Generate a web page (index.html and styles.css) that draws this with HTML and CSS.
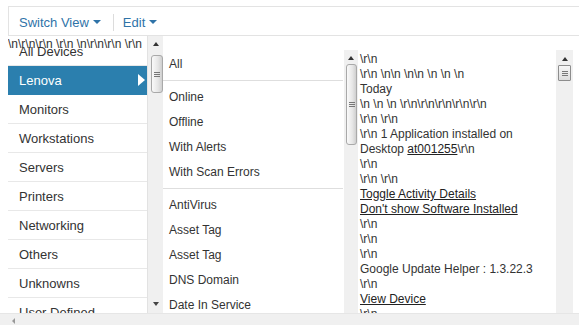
FILE: index.html
```html
<!DOCTYPE html>
<html>
<head>
<meta charset="utf-8">
<link rel="stylesheet" href="styles.css">
</head>
<body>
<div class="page">
  <div class="toolbar">
    <span class="tb-item">Switch View <span class="caret"></span></span>
    <span class="tb-sep"></span>
    <span class="tb-item">Edit <span class="caret"></span></span>
  </div>
  <div class="main">
    <div class="col-left">
      <ul class="dev-list">
        <li class="dev-item"><span class="raw">\n\r\n\r\n \r\n \n\r\n\r\n \r\n</span>All Devices</li>
        <li class="dev-item active">Lenova<span class="arrow"></span></li>
        <li class="dev-item">Monitors</li>
        <li class="dev-item">Workstations</li>
        <li class="dev-item">Servers</li>
        <li class="dev-item">Printers</li>
        <li class="dev-item">Networking</li>
        <li class="dev-item">Others</li>
        <li class="dev-item">Unknowns</li>
        <li class="dev-item">User Defined</li>
      </ul>
      <div class="vscroll vs-left">
        <span class="sb-up"></span>
        <span class="thumb th-left"><span class="grip"></span></span>
        <span class="sb-fill"></span>
        <span class="sb-down"></span>
      </div>
    </div>
    <div class="col-mid">
      <div class="grp">
        <div class="row">All</div>
      </div>
      <div class="grp">
        <div class="row">Online</div>
        <div class="row">Offline</div>
        <div class="row">With Alerts</div>
        <div class="row">With Scan Errors</div>
      </div>
      <div class="grp">
        <div class="row">AntiVirus</div>
        <div class="row">Asset Tag</div>
        <div class="row">Asset Tag</div>
        <div class="row">DNS Domain</div>
        <div class="row">Date In Service</div>
      </div>
    </div>
    <div class="col-right">
      <div class="vscroll vs-mid">
        <span class="sb-up"></span>
        <span class="thumb th-mid"><span class="grip"></span></span>
        <span class="sb-fill"></span>
      </div>
      <div class="activity">
        <div class="ln">\r\n</div>
        <div class="ln">\r\n \n\n \n\n \n \n \n</div>
        <div class="ln">Today</div>
        <div class="ln">\n \n \n \r\n\r\n\r\n\r\n\r\n</div>
        <div class="ln">\r\n \r\n</div>
        <div class="ln">\r\n 1 Application installed on</div>
        <div class="ln">Desktop <a class="lnk">at001255</a>\r\n</div>
        <div class="ln">\r\n</div>
        <div class="ln">\r\n \r\n</div>
        <div class="ln"><a class="lnk">Toggle Activity Details</a></div>
        <div class="ln"><a class="lnk">Don't show Software Installed</a></div>
        <div class="ln">\r\n</div>
        <div class="ln">\r\n</div>
        <div class="ln">\r\n</div>
        <div class="ln">Google Update Helper : 1.3.22.3</div>
        <div class="ln">\r\n</div>
        <div class="ln"><a class="lnk">View Device</a></div>
        <div class="ln">\r\n</div>
        <div class="ln">\r\n</div>
      </div>
      <div class="vscroll vs-right">
        <span class="sb-up"></span>
        <span class="thumb th-right"><span class="grip"></span></span>
        <span class="sb-fill"></span>
      </div>
    </div>
  </div>
  <div class="hscroll"><span class="sb-left"></span></div>
</div>
</body>
</html>
```
FILE: styles.css
```css
html, body {
  margin: 0;
  padding: 0;
  background: #fff;
}
body {
  font-family: "Liberation Sans", Arial, sans-serif;
  color: #333;
  overflow: hidden;
}
.page {
  width: 579px;
  height: 325px;
  overflow: hidden;
  display: flex;
  flex-direction: column;
  padding-top: 6px;
  box-sizing: border-box;
}
.toolbar {
  margin-left: 8px;
  height: 28px;
  border-top: 1px solid #e3e3e3;
  border-bottom: 1px solid #e3e3e3;
  border-left: 1px solid #e3e3e3;
  display: flex;
  align-items: center;
  padding-left: 10px;
  font-size: 13px;
  color: #2f73a8;
  flex: none;
}
.tb-item {
  display: flex;
  align-items: center;
  white-space: nowrap;
  padding-top: 2px;
}
.caret {
  display: inline-block;
  width: 0;
  height: 0;
  border-left: 4px solid transparent;
  border-right: 4px solid transparent;
  border-top: 4px solid #2f73a8;
  margin-left: 4px;
  margin-top: -1px;
}
.tb-sep {
  width: 1px;
  height: 17px;
  background: #dcdcdc;
  margin: 2px 9px 0 12px;
}
.main {
  display: flex;
  height: 277px;
  flex: none;
}
.col-left {
  display: flex;
  margin-left: 8px;
  height: 277px;
  flex: none;
}
.dev-list {
  list-style: none;
  margin: 0;
  padding: 1px 0 0;
  width: 139px;
  overflow: hidden;
  font-size: 13px;
}
.dev-item {
  position: relative;
  height: 28px;
  line-height: 30px;
  border-bottom: 1px solid #e8e8e8;
  padding-left: 11px;
  white-space: nowrap;
}
.raw {
  position: absolute;
  left: 0;
  top: 0;
  line-height: 14px;
  font-size: 12px;
  color: #333;
}
.dev-item.active {
  background: #2b7fae;
  color: #fff;
  border-bottom-color: #2b7fae;
}
.arrow {
  position: absolute;
  right: 2px;
  top: 8px;
  width: 0;
  height: 0;
  border-top: 6px solid transparent;
  border-bottom: 6px solid transparent;
  border-left: 7px solid #fff;
}
.vscroll {
  display: flex;
  flex-direction: column;
  align-items: center;
  background: #f0f0f0;
  flex: none;
  box-sizing: border-box;
}
.vs-left {
  width: 16px;
  height: 277px;
  border-left: 1px solid #e2e2e2;
}
.sb-up {
  width: 0;
  height: 0;
  border-left: 3px solid transparent;
  border-right: 3px solid transparent;
  border-bottom: 4px solid #333;
  margin-top: 6px;
  flex: none;
}
.sb-down {
  width: 0;
  height: 0;
  border-left: 3px solid transparent;
  border-right: 3px solid transparent;
  border-top: 4px solid #444;
  margin-bottom: 7px;
  flex: none;
}
.sb-fill {
  flex: 1;
}
.thumb {
  box-sizing: border-box;
  border: 1px solid #a9a9a9;
  border-radius: 3px;
  background: linear-gradient(to right, #fafafa, #e6e6e6 60%, #cfcfcf);
  display: flex;
  align-items: center;
  justify-content: center;
  flex: none;
}
.grip {
  width: 6px;
  height: 5px;
  border-top: 1px solid #777;
  border-bottom: 1px solid #777;
  position: relative;
  box-sizing: border-box;
}
.grip::after {
  content: "";
  position: absolute;
  left: 0;
  right: 0;
  top: 1px;
  height: 1px;
  background: #777;
}
.th-left {
  width: 12px;
  height: 38px;
  margin-top: 9px;
  margin-left: 2px;
}
.col-mid {
  width: 181px;
  padding-top: 12px;
  flex: none;
  font-size: 12px;
}
.grp {
  border-bottom: 1px solid #dedede;
  padding: 4px 0 3px;
  margin-right: 1px;
}
.grp:last-child {
  border-bottom: none;
}
.row {
  height: 25px;
  line-height: 25px;
  padding-left: 6px;
  white-space: nowrap;
}
.col-right {
  display: flex;
  margin-top: 14px;
  height: 263px;
  flex: none;
}
.vs-mid {
  width: 14px;
  height: 263px;
}
.vs-mid .sb-up {
  margin-top: 6px;
}
.th-mid {
  width: 11px;
  height: 81px;
  margin-top: 4px;
  margin-left: 1px;
}
.activity {
  width: 196px;
  padding-left: 2px;
  padding-top: 2px;
  font-size: 12px;
  line-height: 15px;
  overflow: hidden;
  color: #333;
}
.ln {
  white-space: nowrap;
  height: 15px;
}
.lnk {
  color: #222;
  text-decoration: underline;
}
.vs-right {
  width: 17px;
  height: 263px;
}
.vs-right .sb-up {
  margin-top: 7px;
}
.th-right {
  width: 13px;
  height: 16px;
  margin-top: 4px;
  border-radius: 1px;
  border-color: #8d8d8d;
  background: linear-gradient(#f7f7f7, #dcdcdc);
}
.hscroll {
  height: 12px;
  background: #f0f0f0;
  border-top: 1px solid #e6e6e6;
  display: flex;
  align-items: center;
  flex: none;
}
.sb-left {
  width: 0;
  height: 0;
  border-top: 3px solid transparent;
  border-bottom: 3px solid transparent;
  border-right: 3px solid #999;
  margin-left: 12px;
  margin-top: 1px;
}
```
